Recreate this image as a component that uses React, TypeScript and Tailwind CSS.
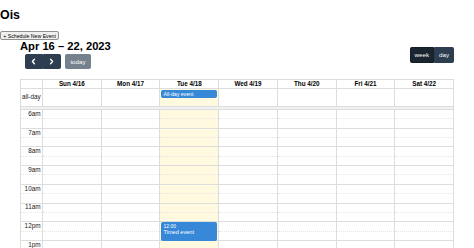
import React from "react";

const days = ["Sun 4/16", "Mon 4/17", "Tue 4/18", "Wed 4/19", "Thu 4/20", "Fri 4/21", "Sat 4/22"];
const hours = ["6am", "7am", "8am", "9am", "10am", "11am", "12pm", "1pm", "2pm"];

function Chevron({ dir }: { dir: "l" | "r" }) {
  return (
    <svg width="9" height="9" viewBox="0 0 10 10" fill="none" stroke="white" strokeWidth="1.5" strokeLinecap="round" strokeLinejoin="round">
      {dir === "l" ? <polyline points="6,2.5 3.8,5 6,7.5" /> : <polyline points="4,2.5 6.2,5 4,7.5" />}
    </svg>
  );
}

export default function App() {
  return (
    <div className="w-[474px] h-[248px] overflow-hidden bg-white text-black font-['Liberation_Sans',Arial,sans-serif]">
      <h1 className="text-[12.4px] font-bold leading-[14.3px] mt-[8.4px] mb-[8.4px]">Ois</h1>
      <button className="block h-[9px] bg-[#efefef] border border-[#8f8f8f] rounded-[2px] px-[2.3px] text-[5.2px] leading-[6px] text-black">
        + Schedule New Event
      </button>
      <div className="px-[20px]">
        <div className="flex items-center justify-between mb-[9.4px]">
          <div>
            <h2 className="text-[11.2px] font-bold leading-[13.1px]">Apr 16 – 22, 2023</h2>
            <div className="flex mt-[0.5px]">
              <div className="ml-[4.7px] flex">
                <button className="h-[15.5px] w-[18px] flex items-center justify-center bg-[#2c3e50] border border-[#2c3e50] rounded-l-[1.6px]">
                  <Chevron dir="l" />
                </button>
                <button className="h-[15.5px] w-[18px] flex items-center justify-center bg-[#2c3e50] border border-[#2c3e50] rounded-r-[1.6px]">
                  <Chevron dir="r" />
                </button>
              </div>
              <button className="ml-[4.7px] h-[15.5px] px-[4px] bg-[#2c3e50] border border-[#2c3e50] rounded-[1.6px] opacity-65 text-white text-[6.2px] leading-[9px]">
                today
              </button>
            </div>
          </div>
          <div className="flex">
            <button className="h-[16px] px-[4px] bg-[#1a252f] border border-[#151e27] rounded-l-[1.6px] text-white text-[6.2px] leading-[9px]">
              week
            </button>
            <button className="h-[16px] px-[4px] bg-[#2c3e50] border border-[#2c3e50] rounded-r-[1.6px] text-white text-[6.2px] leading-[9px]">
              day
            </button>
          </div>
        </div>

        <div className="w-[434px] border border-[#ddd]">
          {/* header */}
          <div className="flex h-[9.5px] border-b border-[#ddd]">
            <div className="w-[21px] shrink-0" />
            {days.map((d) => (
              <div key={d} className="flex-1 border-l border-[#ddd] flex items-center justify-center text-[6.3px] font-bold leading-none">
                {d}
              </div>
            ))}
          </div>
          {/* all-day */}
          <div className="flex h-[18px] border-b border-[#ddd]">
            <div className="w-[21px] shrink-0 flex items-center justify-end pr-[1.4px] text-[6.3px] leading-none text-[#222]">all-day</div>
            {days.map((d, i) => (
              <div key={d} className={`flex-1 border-l border-[#ddd] relative ${i === 2 ? "bg-[#fffadf]" : ""}`}>
                {i === 2 && (
                  <div className="absolute left-[1px] right-[1px] top-[0.5px] h-[8px] bg-[#3788d8] border border-[#3788d8] rounded-[1.5px] text-white text-[5.2px] leading-[6px] pl-[1px] whitespace-nowrap overflow-hidden">
                    All-day event
                  </div>
                )}
              </div>
            ))}
          </div>
          {/* divider */}
          <div className="h-[2px] bg-[#f1f1f1]" />
          {/* body */}
          <div className="flex">
            <div className="w-[21px] shrink-0">
              {hours.map((h) => (
                <React.Fragment key={h}>
                  <div className="h-[9.35px] border-t border-[#ddd] flex items-center justify-end pr-[1.4px] text-[6.4px] leading-none text-[#222]">{h}</div>
                  <div className="h-[9.35px] border-t border-dotted border-[#e6e6e6]" />
                </React.Fragment>
              ))}
            </div>
            {days.map((d, i) => (
              <div key={d} className={`flex-1 border-l border-[#ddd] relative ${i === 2 ? "bg-[#fffadf]" : ""}`}>
                {hours.map((h) => (
                  <React.Fragment key={h}>
                    <div className="h-[9.35px] border-t border-[#ddd]" />
                    <div className="h-[9.35px] border-t border-dotted border-[#e6e6e6]" />
                  </React.Fragment>
                ))}
                {i === 2 && (
                  <div className="absolute left-[1px] right-[1px] top-[113.2px] h-[18.6px] bg-[#3788d8] border border-[#3788d8] rounded-[1.5px] text-white px-[1px] overflow-hidden">
                    <div className="text-[5px] leading-[6px]">12:00</div>
                    <div className="text-[5.6px] leading-[6.5px]">Timed event</div>
                  </div>
                )}
              </div>
            ))}
          </div>
        </div>
      </div>
    </div>
  );
}
